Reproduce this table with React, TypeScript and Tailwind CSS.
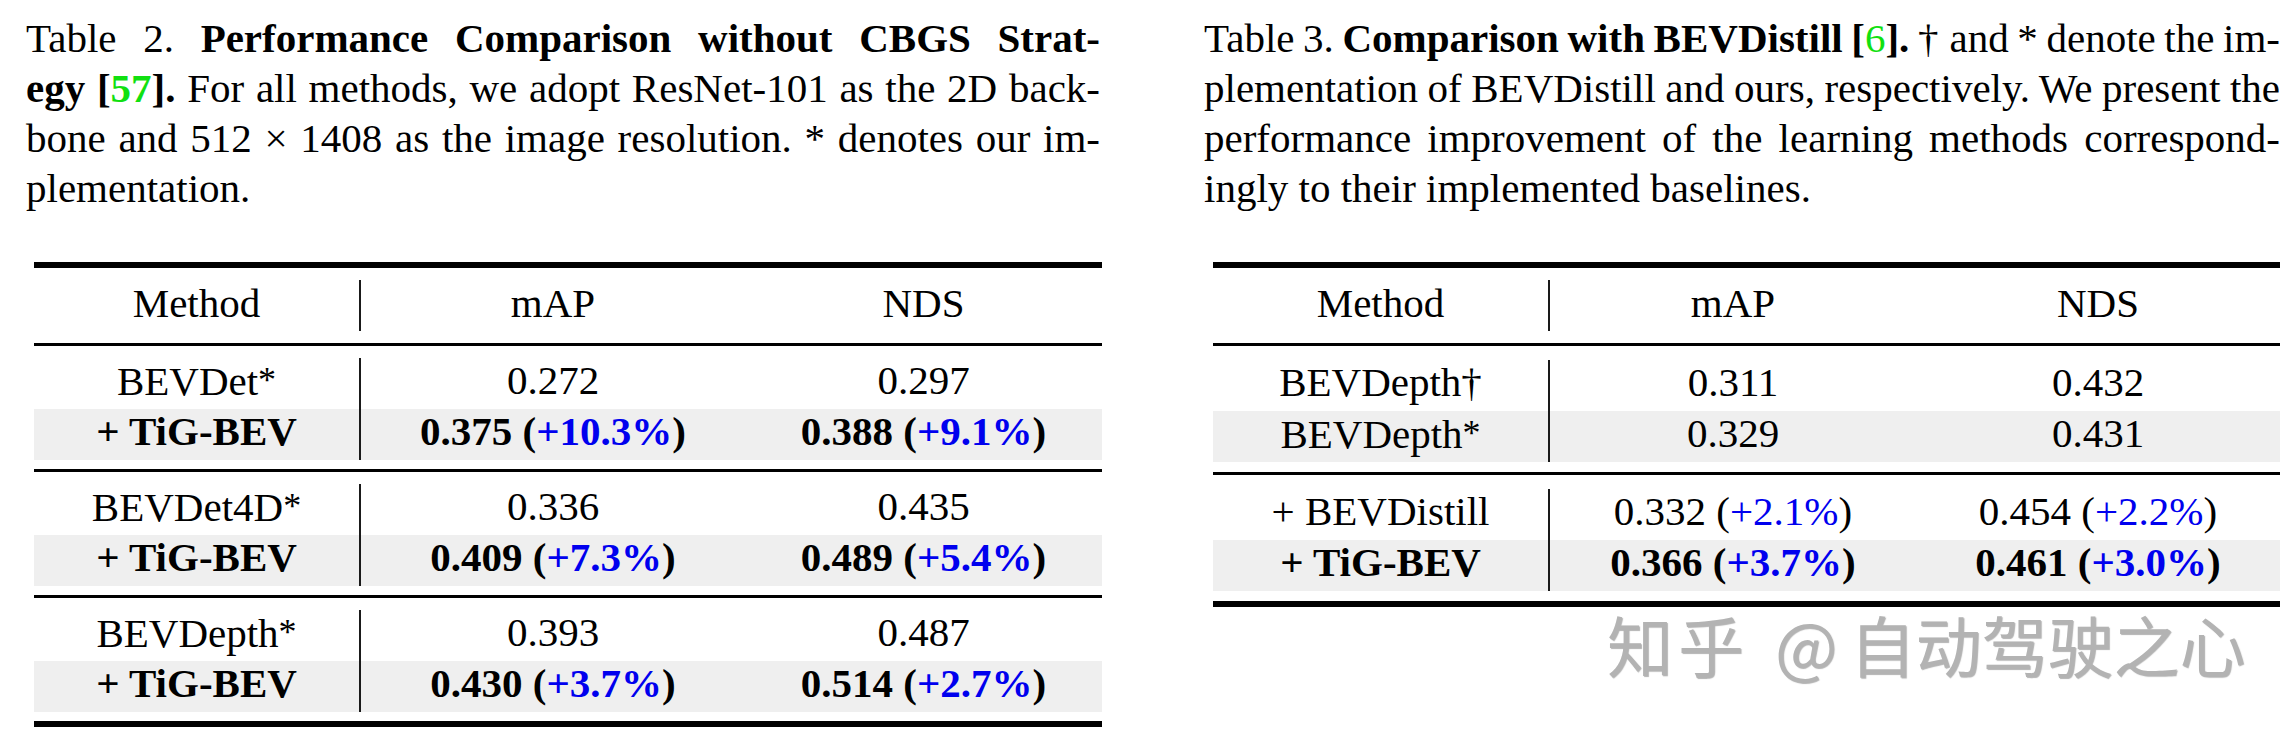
import React from "react";
import clsx from "clsx";

type Cell = { v: string; d?: string };
type Row = {
  method: React.ReactNode;
  map: Cell;
  nds: Cell;
  bold?: boolean;
  shade?: boolean;
};

const Star = () => <span className="align-[3px] text-[36px]">*</span>;

function Value({ cell }: { cell: Cell }) {
  return (
    <>
      {cell.v}
      {cell.d && (
        <>
          {" ("}
          <span className="text-[#0000ee]">{cell.d}</span>
          {")"}
        </>
      )}
    </>
  );
}

function TableRow({ row, first, second }: { row: Row; first: string; second: string }) {
  return (
    <div
      className={clsx(
        "flex h-[51px] leading-[45px] text-center whitespace-nowrap",
        row.shade && "bg-[#efefef]",
        row.bold && "font-bold"
      )}
    >
      <div className={clsx("border-r-2 border-[#1a1a1a]", first)}>{row.method}</div>
      <div className={second}>
        <Value cell={row.map} />
      </div>
      <div className="flex-1">
        <Value cell={row.nds} />
      </div>
    </div>
  );
}

function ResultTable({
  groups,
  first,
  second,
  padTop,
  padBottom,
  className,
}: {
  groups: Row[][];
  first: string;
  second: string;
  padTop: string;
  padBottom: string;
  className: string;
}) {
  return (
    <div className={clsx("flex flex-col", className)}>
      <div className="h-[6px] bg-black" />
      <div className="py-[12px]">
        <div className="flex h-[51px] leading-[47px] text-center">
          <div className={clsx("border-r-2 border-[#1a1a1a]", first)}>Method</div>
          <div className={second}>mAP</div>
          <div className="flex-1">NDS</div>
        </div>
      </div>
      {groups.map((g, i) => (
        <React.Fragment key={i}>
          <div className="h-[3px] bg-black" />
          <div className={clsx(padTop, padBottom)}>
            {g.map((r, j) => (
              <TableRow key={j} row={r} first={first} second={second} />
            ))}
          </div>
        </React.Fragment>
      ))}
      <div className="h-[6px] bg-black" />
    </div>
  );
}

function Line({ children, last }: { children: React.ReactNode; last?: boolean }) {
  return (
    <div
      className={clsx(
        "h-[50px] leading-[50px]",
        last ? "text-left" : "text-justify [text-align-last:justify] [word-spacing:-4px]"
      )}
    >
      {children}
    </div>
  );
}

const tig = (map: Cell, nds: Cell): Row => ({
  method: "+ TiG-BEV",
  map,
  nds,
  bold: true,
  shade: true,
});

const leftGroups: Row[][] = [
  [
    { method: <>BEVDet<Star /></>, map: { v: "0.272" }, nds: { v: "0.297" } },
    tig({ v: "0.375", d: "+10.3%" }, { v: "0.388", d: "+9.1%" }),
  ],
  [
    { method: <>BEVDet4D<Star /></>, map: { v: "0.336" }, nds: { v: "0.435" } },
    tig({ v: "0.409", d: "+7.3%" }, { v: "0.489", d: "+5.4%" }),
  ],
  [
    { method: <>BEVDepth<Star /></>, map: { v: "0.393" }, nds: { v: "0.487" } },
    tig({ v: "0.430", d: "+3.7%" }, { v: "0.514", d: "+2.7%" }),
  ],
];

const rightGroups: Row[][] = [
  [
    { method: "BEVDepth†", map: { v: "0.311" }, nds: { v: "0.432" } },
    { method: <>BEVDepth<Star /></>, map: { v: "0.329" }, nds: { v: "0.431" }, shade: true },
  ],
  [
    { method: "+ BEVDistill", map: { v: "0.332", d: "+2.1%" }, nds: { v: "0.454", d: "+2.2%" } },
    tig({ v: "0.366", d: "+3.7%" }, { v: "0.461", d: "+3.0%" }),
  ],
];

export default function App() {
  return (
    <div className="flex h-[740px] w-[2296px] overflow-hidden bg-white text-[41px] text-black font-['Liberation_Serif','Times_New_Roman',serif]">
      <div className="ml-[26px] mt-[13px] flex w-[1074px] flex-col">
        <div>
          <Line>
            Table 2. <b>Performance Comparison without CBGS Strat-</b>
          </Line>
          <Line>
            <b>
              egy [<span className="text-[#11e011]">57</span>].
            </b>{" "}
            For all methods, we adopt ResNet-101 as the 2D back-
          </Line>
          <Line>bone and 512 × 1408 as the image resolution. * denotes our im-</Line>
          <Line last>plementation.</Line>
        </div>
        <ResultTable
          className="ml-[8px] mt-[49px] w-[1068px]"
          groups={leftGroups}
          first="w-[327px]"
          second="w-[384px]"
          padTop="pt-[12px]"
          padBottom="pb-[9px]"
        />
      </div>

      <div className="ml-[104px] mt-[13px] flex w-[1076px] flex-col">
        <div>
          <Line>
            Table 3. <b>Comparison with BEVDistill [<span className="font-normal text-[#11e011]">6</span>].</b> † and * denote the im-
          </Line>
          <Line>plementation of BEVDistill and ours, respectively. We present the</Line>
          <Line>performance improvement of the learning methods correspond-</Line>
          <Line last>ingly to their implemented baselines.</Line>
        </div>
        <ResultTable
          className="ml-[9px] mt-[49px] w-[1067px]"
          groups={rightGroups}
          first="w-[337px]"
          second="w-[366px]"
          padTop="pt-[14px]"
          padBottom="pb-[10px]"
        />
        <div className="ml-[403px] mt-[3px] whitespace-nowrap text-[66px] leading-none text-[#b3b3b3] [text-shadow:1px_1px_1px_rgba(0,0,0,0.3)] font-['Noto_Sans_CJK_SC',sans-serif]">
          <span className="tracking-[5px]">知乎</span>
          <span className="ml-[26px]">@</span>
          <span className="ml-[12px]">自动驾驶之心</span>
        </div>
      </div>
    </div>
  );
}
